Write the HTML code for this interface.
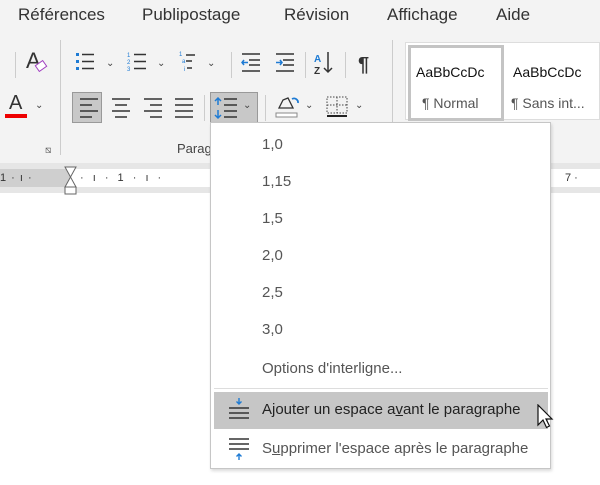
<!DOCTYPE html>
<html><head><meta charset="utf-8"><style>
*{margin:0;padding:0;box-sizing:border-box}
body{width:600px;height:485px;overflow:hidden;background:#fff;font-family:"Liberation Sans",sans-serif;position:relative}
.a{position:absolute}
.tab{position:absolute;top:5px;font-size:17px;color:#333}
.mi{position:absolute;left:262px;font-size:15px;color:#555}
.chev{position:absolute;font-size:10px;color:#444}
</style></head><body>
<div class="a" style="left:0;top:0;width:600px;height:163px;background:#f3f3f3"></div>
<div class="tab" style="left:18px">Références</div>
<div class="tab" style="left:142px">Publipostage</div>
<div class="tab" style="left:284px">Révision</div>
<div class="tab" style="left:387px">Affichage</div>
<div class="tab" style="left:496px">Aide</div>
<div class="a" style="left:15px;top:52px;width:1px;height:26px;background:#ccc"></div>
<div class="a" style="left:60px;top:40px;width:1px;height:115px;background:#ccc"></div>
<div class="a" style="left:231px;top:52px;width:1px;height:26px;background:#ccc"></div>
<div class="a" style="left:305px;top:52px;width:1px;height:26px;background:#ccc"></div>
<div class="a" style="left:345px;top:52px;width:1px;height:26px;background:#ccc"></div>
<div class="a" style="left:204px;top:95px;width:1px;height:26px;background:#ccc"></div>
<div class="a" style="left:265px;top:95px;width:1px;height:26px;background:#ccc"></div>
<div class="a" style="left:392px;top:40px;width:1px;height:115px;background:#ccc"></div>
<div class="a" style="left:26px;top:48px;font-size:22px;color:#333">A</div>
<div class="a" style="left:36px;top:62px;width:10px;height:8px;background:#fff;border:1.5px solid #a040c0;transform:rotate(-35deg)"></div>
<svg class="a" style="left:74px;top:50px" width="150" height="24">
<g fill="#1e7bd4"><rect x="2" y="3" width="3" height="3"/><rect x="2" y="10" width="3" height="3"/><rect x="2" y="17" width="3" height="3"/></g>
<g stroke="#333" stroke-width="1.5"><path d="M8 4.5h12M8 11.5h12M8 18.5h12M60 4.5h12M60 11.5h12M60 18.5h12M112 5h9M112 11h6M113 18h5"/></g>
<g fill="#1e7bd4" font-size="6" font-family="Liberation Sans"><text x="53" y="7">1</text><text x="53" y="14">2</text><text x="53" y="21">3</text><text x="105" y="6">1</text><text x="108" y="13">a</text><text x="110" y="21">i</text></g>
</svg>
<div class="chev" style="left:106px;top:58px">⌄</div><div class="chev" style="left:157px;top:58px">⌄</div><div class="chev" style="left:207px;top:58px">⌄</div>
<svg class="a" style="left:240px;top:50px" width="140" height="26">
<g stroke="#333" stroke-width="1.5"><path d="M2 4h18M9 10h11M9 15h11M2 21h18M36 4h18M43 10h11M43 15h11M36 21h18"/></g>
<path d="M2 12.5h6M4 10l-2 2.5 2 2.5M36 12.5h6M40 10l2 2.5-2 2.5" stroke="#1e7bd4" stroke-width="1.5" fill="none"/>
<text x="74" y="12" font-size="10" fill="#1e7bd4" font-family="Liberation Sans" font-weight="bold">A</text>
<text x="74" y="24" font-size="10" fill="#333" font-family="Liberation Sans" font-weight="bold">Z</text>
<path d="M88 2v20M84 18l4 4 4-4" stroke="#333" stroke-width="1.5" fill="none"/>
<text x="118" y="21" font-size="20" fill="#333" font-family="Liberation Sans" font-weight="bold">¶</text>
</svg>
<div class="a" style="left:9px;top:92px;font-size:20px;color:#333">A</div>
<div class="a" style="left:5px;top:114px;width:22px;height:4px;background:#e00"></div>
<div class="chev" style="left:35px;top:100px">⌄</div>
<div class="a" style="left:72px;top:92px;width:30px;height:31px;background:#c8c8c8;border:1px solid #999"></div>
<svg class="a" style="left:76px;top:96px" width="125" height="24">
<g stroke="#333" stroke-width="1.5"><path d="M4 3h18M4 9h12M4 15h18M4 21h12M36 3h18M39 9h12M36 15h18M39 21h12M68 3h18M74 9h12M68 15h18M74 21h12M99 3h18M99 9h18M99 15h18M99 21h18"/></g></svg>
<div class="a" style="left:210px;top:92px;width:48px;height:31px;background:#c8c8c8;border:1px solid #999"></div>
<svg class="a" style="left:213px;top:96px" width="30" height="24"><path d="M5 2v7M2 5l3-3 3 3M5 14v8M2 19l3 3 3-3" stroke="#1e7bd4" stroke-width="1.5" fill="none"/><path d="M11 3h13M11 9h13M11 15h13M11 21h13" stroke="#333" stroke-width="1.5"/></svg>
<div class="chev" style="left:243px;top:100px">⌄</div>
<svg class="a" style="left:275px;top:94px" width="60" height="26"><path d="M8 6l-4 8h14l-5-10z" stroke="#333" fill="none" stroke-width="1.3"/><path d="M17 5a4 4 0 0 1 6 4" stroke="#1e7bd4" stroke-width="1.8" fill="none"/><rect x="1" y="19" width="21" height="4" fill="#fff" stroke="#888"/></svg>
<div class="chev" style="left:305px;top:100px">⌄</div>
<svg class="a" style="left:325px;top:95px" width="24" height="24"><rect x="2" y="2" width="20" height="16" fill="none" stroke="#444" stroke-dasharray="1.5 1.5"/><path d="M12 2v16M2 10h20" stroke="#444" stroke-dasharray="1.5 1.5"/><path d="M2 21h20" stroke="#222" stroke-width="2"/></svg>
<div class="chev" style="left:355px;top:100px">⌄</div>
<div class="a" style="left:177px;top:141px;font-size:13px;color:#444">Parag</div>
<div class="a" style="left:45px;top:145px;font-size:10px;color:#555">⧅</div>
<div class="a" style="left:405px;top:42px;width:195px;height:78px;background:#fff;border:1px solid #ddd"></div>
<div class="a" style="left:408px;top:45px;width:96px;height:76px;border:3px solid #c4c4c4;background:#fff"></div>
<div class="a" style="left:416px;top:64px;font-size:14px;color:#111">AaBbCcDc</div>
<div class="a" style="left:422px;top:95px;font-size:14px;color:#555">¶ Normal</div>
<div class="a" style="left:513px;top:64px;font-size:14px;color:#111">AaBbCcDc</div>
<div class="a" style="left:511px;top:95px;font-size:14px;color:#555">¶ Sans int...</div>
<div class="a" style="left:0;top:163px;width:600px;height:30px;background:#e6e6e6"></div>
<div class="a" style="left:0;top:169px;width:70px;height:18px;background:#cfcfcf"></div>
<div class="a" style="left:70px;top:169px;width:530px;height:18px;background:#fff"></div>
<div class="a" style="left:0;top:172px;font-size:11px;color:#333;letter-spacing:1px">1 · ı · </div>
<div class="a" style="left:80px;top:172px;font-size:11px;color:#333;letter-spacing:3px">· ı · 1 · ı ·</div>
<div class="a" style="left:565px;top:172px;font-size:11px;color:#333">7 ·</div>
<svg class="a" style="left:63px;top:166px" width="16" height="30"><path d="M2 1h11L7.5 11z M2 21h11L7.5 11z" fill="#fff" stroke="#666"/><rect x="2" y="21" width="11" height="7" fill="#fff" stroke="#666"/></svg>
<div class="a" style="left:210px;top:122px;width:341px;height:347px;background:#fff;border:1px solid #c6c6c6;box-shadow:1px 2px 3px rgba(0,0,0,.15)"></div>
<div class="mi" style="top:136px">1,0</div>
<div class="mi" style="top:173px">1,15</div>
<div class="mi" style="top:210px">1,5</div>
<div class="mi" style="top:247px">2,0</div>
<div class="mi" style="top:284px">2,5</div>
<div class="mi" style="top:321px">3,0</div>
<div class="mi" style="top:360px">Options d'interligne...</div>
<div class="a" style="left:214px;top:388px;width:334px;height:1px;background:#ddd"></div>
<div class="a" style="left:214px;top:392px;width:334px;height:37px;background:#c6c6c6"></div>
<svg class="a" style="left:226px;top:397px" width="26" height="26"><path d="M13 1v6M10.5 4.5l2.5 2.5 2.5-2.5" stroke="#1e7bd4" stroke-width="1.4" fill="none"/><path d="M3 11h20M3 16h20M3 21h20" stroke="#333" stroke-width="1.5"/></svg>
<div class="mi" style="top:401px;color:#222">Ajouter un espace a<u>v</u>ant le paragraphe</div>
<svg class="a" style="left:226px;top:436px" width="26" height="26"><path d="M3 3h20M3 8h20M3 13h20" stroke="#333" stroke-width="1.5"/><path d="M13 24v-6M10.5 20.5l2.5-2.5 2.5 2.5" stroke="#1e7bd4" stroke-width="1.4" fill="none"/></svg>
<div class="mi" style="top:440px">S<u>u</u>pprimer l'espace après le paragraphe</div>
<svg class="a" style="left:536px;top:404px" width="18" height="28"><path d="M2 1v20l5-5 3.5 7.5 3-1.5-3.5-7H16z" fill="#fff" stroke="#111" stroke-width="1.2"/></svg>
</body></html>
